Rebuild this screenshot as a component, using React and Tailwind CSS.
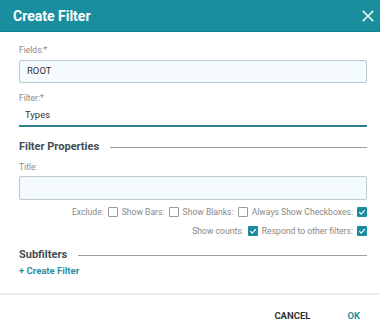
import React from "react";

const Check = ({ checked }) => (
  <span
    className={
      checked
        ? "inline-flex items-center justify-center w-[10px] h-[10px] bg-[#1a8c9e] rounded-[1px]"
        : "inline-block w-[10px] h-[10px] border border-[#9a9a9a] bg-white rounded-[1px]"
    }
  >
    {checked && (
      <svg width="8" height="8" viewBox="0 0 10 10">
        <path d="M1.6 5.2 L4 7.6 L8.5 2.6" fill="none" stroke="white" strokeWidth="1.5" />
      </svg>
    )}
  </span>
);

const Opt = ({ label, checked }) => (
  <span className="flex items-center gap-[4px] ml-[4px]">
    <span>{label}</span>
    <Check checked={checked} />
  </span>
);

const App = () => {
  return (
    <div className="w-[380px] h-[328px] bg-white font-['Roboto',sans-serif] overflow-hidden">
      <div className="h-[32px] bg-[#198e9f] flex items-center justify-between pl-[13px] pr-[6px] border-b border-[#17808f]">
        <span className="text-white font-bold text-[14px] leading-[16px]">Create Filter</span>
        <svg width="12" height="12" viewBox="0 0 12 12">
          <path d="M0.7 0.7 L11.3 11.3 M11.3 0.7 L0.7 11.3" stroke="white" strokeWidth="1.5" />
        </svg>
      </div>

      <div className="pl-[19px] pr-[13px]">
        <div className="mt-[12px] text-[8.5px] leading-[12px] text-[#8a8a8a]">Fields:*</div>
        <div className="mt-[4px] h-[23px] bg-[#f5fafd] border border-[#b9c9d6] rounded-[2px] flex items-center pl-[7px] text-[9.5px] text-[#333]">
          ROOT
        </div>

        <div className="mt-[9px] text-[8.5px] leading-[12px] text-[#8a8a8a]">Filter:*</div>
        <div className="h-[23px] border-b-2 border-[#2e7f8c] flex items-center pt-[2px] pl-[6px] text-[9.5px] text-[#333]">
          Types
        </div>

        <div className="mt-[13px] h-[14px] flex items-center">
          <span className="font-bold text-[11px] leading-[14px] text-[#444c55]">Filter Properties</span>
          <span className="flex-1 h-px bg-[#9aa0a6] ml-[11px]" />
        </div>

        <div className="mt-[7px] text-[8.5px] leading-[12px] text-[#8a8a8a]">Title:</div>
        <div className="mt-[3px] h-[24px] bg-[#f5fafd] border border-[#b9c9d6] rounded-[2px]" />

        <div className="mt-[6px] h-[12px] flex justify-end items-center text-[8.6px] leading-[12px] text-[#888]">
          <Opt label="Exclude:" />
          <Opt label="Show Bars:" />
          <Opt label="Show Blanks:" />
          <Opt label="Always Show Checkboxes:" checked />
        </div>
        <div className="mt-[7px] h-[12px] flex justify-end items-center text-[8.6px] leading-[12px] text-[#888]">
          <Opt label="Show counts:" checked />
          <Opt label="Respond to other filters:" checked />
        </div>

        <div className="mt-[11px] h-[14px] flex items-center">
          <span className="font-bold text-[11px] leading-[14px] text-[#444c55]">Subfilters</span>
          <span className="flex-1 h-px bg-[#9aa0a6] ml-[11px]" />
        </div>
        <div className="mt-[3px] text-[9.5px] leading-[12px] font-bold text-[#2a8fa0]">+ Create Filter</div>
      </div>

      <div className="mt-[16px] h-[2px] bg-[#ececec]" />
      <div className="flex justify-end items-center h-[42px] pr-[20px] text-[9.5px] font-bold">
        <span className="text-[#333] mr-[37px]">CANCEL</span>
        <span className="text-[#2a8fa0]">OK</span>
      </div>
    </div>
  );
};

export default App;
